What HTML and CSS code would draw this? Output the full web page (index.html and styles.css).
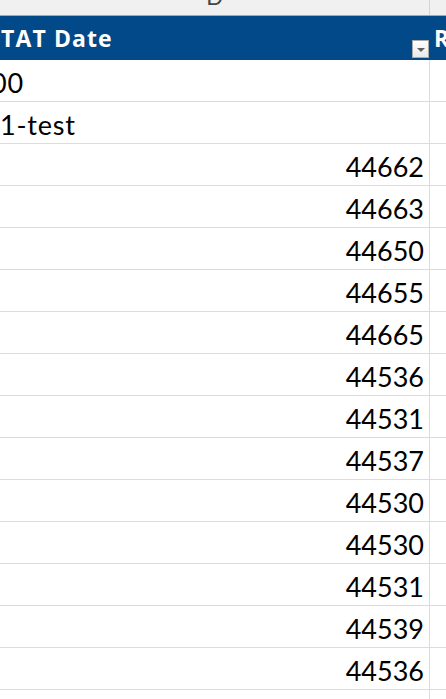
FILE: index.html
```html
<!DOCTYPE html>
<html>
<head>
<meta charset="utf-8">
<link rel="stylesheet" href="styles.css">
</head>
<body>
<div class="sheet">
  <div class="colhead">
    <div class="ch ch-d"><span class="ch-label">D</span></div>
    <div class="ch ch-e"></div>
  </div>
  <div class="thead">
    <div class="th th-main">
      <span class="th-label">TAT Date</span>
      <span class="filter"><span class="tri"></span></span>
    </div>
    <div class="th th-next"><span class="th-label">R</span></div>
  </div>
  <div class="row"><div class="cell text"><span class="clip00">00</span></div><div class="cell rest"></div></div>
  <div class="row"><div class="cell text">1-test</div><div class="cell rest"></div></div>
  <div class="row"><div class="cell num">44662</div><div class="cell rest"></div></div>
  <div class="row"><div class="cell num">44663</div><div class="cell rest"></div></div>
  <div class="row"><div class="cell num">44650</div><div class="cell rest"></div></div>
  <div class="row"><div class="cell num">44655</div><div class="cell rest"></div></div>
  <div class="row"><div class="cell num">44665</div><div class="cell rest"></div></div>
  <div class="row"><div class="cell num">44536</div><div class="cell rest"></div></div>
  <div class="row"><div class="cell num">44531</div><div class="cell rest"></div></div>
  <div class="row"><div class="cell num">44537</div><div class="cell rest"></div></div>
  <div class="row"><div class="cell num">44530</div><div class="cell rest"></div></div>
  <div class="row"><div class="cell num">44530</div><div class="cell rest"></div></div>
  <div class="row"><div class="cell num">44531</div><div class="cell rest"></div></div>
  <div class="row"><div class="cell num">44539</div><div class="cell rest"></div></div>
  <div class="row"><div class="cell num">44536</div><div class="cell rest"></div></div>
  <div class="row"><div class="cell num"></div><div class="cell rest"></div></div>
</div>
</body>
</html>
```

FILE: styles.css
```css
html, body {
  margin: 0;
  padding: 0;
  background: #ffffff;
}
body {
  width: 446px;
  height: 699px;
  overflow: hidden;
  font-family: Lato, "Open Sans", "Liberation Sans", sans-serif;
}
.sheet {
  display: flex;
  flex-direction: column;
  width: 446px;
}
.colhead {
  display: flex;
  height: 15px;
  background: #f0f0f0;
  border-bottom: 1px solid #a7a7a7;
}
.ch {
  height: 15px;
  overflow: hidden;
  display: flex;
  align-items: flex-end;
}
.ch-d {
  width: 429px;
  border-right: 1px solid #d4d4d4;
  justify-content: center;
}
.ch-label {
  font-size: 22px;
  line-height: 22px;
  color: #444444;
  margin-bottom: 7px;
  margin-left: 0px;
}
.ch-e {
  flex: 1;
}
.thead {
  display: flex;
  height: 44px;
  background: #02498a;
  color: #ffffff;
}
.th {
  font-family: "Open Sans", Lato, sans-serif;
  font-weight: 700;
  font-size: 23px;
  height: 44px;
  box-sizing: border-box;
}
.th-main {
  width: 430px;
  display: flex;
  justify-content: space-between;
  align-items: flex-start;
  padding-left: 1px;
  padding-right: 1px;
}
.th-label {
  display: block;
  padding-top: 10px;
  line-height: 25px;
  letter-spacing: 1.1px;
}
.th-next {
  flex: 1;
  padding-left: 4px;
  overflow: hidden;
}
.filter {
  display: flex;
  align-items: center;
  justify-content: center;
  width: 15px;
  height: 16px;
  margin-top: 24px;
  border: 1px solid #a9a9a9;
  background: linear-gradient(#ffffff, #e9e9e9);
}
.tri {
  display: block;
  width: 0;
  height: 0;
  margin-top: 2px;
  border-left: 4px solid transparent;
  border-right: 4px solid transparent;
  border-top: 4px solid #606060;
}
.row {
  display: flex;
  height: 42px;
  border-bottom: 1px solid #dcdcdc;
  box-sizing: border-box;
  flex-shrink: 0;
}
.cell {
  height: 41px;
  box-sizing: border-box;
  font-size: 27px;
  color: #000000;
  line-height: 37px;
  padding-top: 4px;
  white-space: nowrap;
  overflow: hidden;
}
.text, .num {
  width: 430px;
  border-right: 1px solid #dcdcdc;
}
.text {
  padding-left: 0;
  letter-spacing: 0.8px;
}
.num {
  text-align: right;
  padding-right: 5px;
}
.clip00 {
  display: inline-block;
  margin-left: -9px;
}
.rest {
  flex: 1;
}
```
